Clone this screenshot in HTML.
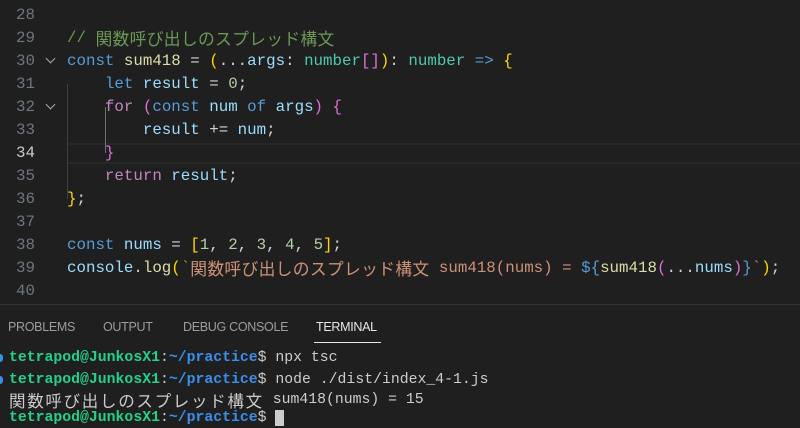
<!DOCTYPE html>
<html><head><meta charset="utf-8"><style>
*{margin:0;padding:0;box-sizing:border-box}
body{width:800px;height:417px;background:#1f1f1f;overflow:hidden;position:relative;font-family:"Liberation Mono","Noto Sans CJK JP",monospace}
.ln{position:absolute;left:0;width:35px;text-align:right;color:#6e7681;font-size:15.8px;line-height:23px}
.c{position:absolute;left:67px;font-size:15.8px;line-height:23px;height:23px;white-space:pre;color:#d4d4d4}
.j{font-family:"Noto Sans CJK JP",sans-serif;font-size:16.8px;letter-spacing:0.3px;display:inline-block;line-height:23px;height:23px;vertical-align:top;overflow:hidden;white-space:nowrap}
.k{color:#569cd6}.p{color:#c586c0}.v{color:#9cdcfe}.f{color:#dcdcaa}.t{color:#4ec9b0}.n{color:#b5cea8}.s{color:#ce9178}.cm{color:#6a9955}
.y{color:#ffd700}.m{color:#da70d6}.b{color:#179fff}
.chev{position:absolute;left:47px;width:7px;height:7px;border-right:1.3px solid #aaa;border-bottom:1.3px solid #aaa;transform:rotate(45deg)}
.tab{position:absolute;top:320px;font-family:"Liberation Sans",sans-serif;font-size:12.5px;color:#9d9d9d;letter-spacing:-0.3px}
.tl{position:absolute;left:9px;font-size:14.8px;line-height:20px;height:20px;white-space:pre;color:#cccccc}
.tl .j{line-height:20px;height:20px;font-size:16.5px;letter-spacing:1.7px}
.g{color:#23d18b;font-weight:bold}.bl{color:#3b8eea;font-weight:bold}
</style></head><body>
<div style="position:absolute;left:67px;top:143px;width:733px;height:21px;border-top:2px solid #282828;border-bottom:2px solid #282828"></div>
<div style="position:absolute;left:67px;top:84px;width:1px;height:115px;background:#404040"></div>
<div style="position:absolute;left:105px;top:107px;width:1px;height:46px;background:#707070"></div>

<div class="ln" style="top:4px">28</div>
<div class="ln" style="top:27px">29</div>
<div class="ln" style="top:50px">30</div>
<div class="ln" style="top:73px">31</div>
<div class="ln" style="top:96px">32</div>
<div class="ln" style="top:119px">33</div>
<div class="ln" style="top:142px;color:#cccccc">34</div>
<div class="ln" style="top:165px">35</div>
<div class="ln" style="top:188px">36</div>
<div class="ln" style="top:211px">37</div>
<div class="ln" style="top:234px">38</div>
<div class="ln" style="top:257px">39</div>
<div class="ln" style="top:280px">40</div>
<div class="chev" style="top:55px"></div>
<div class="chev" style="top:101px"></div>

<div class="c cm" style="top:27px">// <span class="j">関数呼び出しのスプレッド構文</span></div>
<div class="c" style="top:50px"><span class="k">const</span> <span class="f">sum418</span> = <span class="y">(</span>...<span class="v">args</span>: <span class="t">number</span><span class="m">[]</span><span class="y">)</span>: <span class="t">number</span> <span class="k">=&gt;</span> <span class="y">{</span></div>
<div class="c" style="top:73px">    <span class="k">let</span> <span class="v">result</span> = <span class="n">0</span>;</div>
<div class="c" style="top:96px">    <span class="p">for</span> <span class="m">(</span><span class="k">const</span> <span class="v">num</span> <span class="k">of</span> <span class="v">args</span><span class="m">)</span> <span class="m">{</span></div>
<div class="c" style="top:119px">        <span class="v">result</span> += <span class="v">num</span>;</div>
<div class="c" style="top:142px">    <span class="m">}</span></div>
<div class="c" style="top:165px">    <span class="p">return</span> <span class="v">result</span>;</div>
<div class="c" style="top:188px"><span class="y">}</span>;</div>
<div class="c" style="top:234px"><span class="k">const</span> <span class="v">nums</span> = <span class="y">[</span><span class="n">1</span>, <span class="n">2</span>, <span class="n">3</span>, <span class="n">4</span>, <span class="n">5</span><span class="y">]</span>;</div>
<div class="c" style="top:257px"><span class="v">console</span>.<span class="f">log</span><span class="y">(</span><span class="s">`<span class="j">関数呼び出しのスプレッド構文</span> sum418(nums) = </span><span class="k">${</span><span class="f">sum418</span><span class="m">(</span>...<span class="v">nums</span><span class="m">)</span><span class="k">}</span><span class="s">`</span><span class="y">)</span>;</div>

<div style="position:absolute;left:0;top:304px;width:800px;height:1px;background:#333"></div>
<div class="tab" style="left:8px">PROBLEMS</div>
<div class="tab" style="left:103px">OUTPUT</div>
<div class="tab" style="left:183px">DEBUG CONSOLE</div>
<div class="tab" style="left:316px;color:#e7e7e7">TERMINAL</div>
<div style="position:absolute;left:314px;top:342px;width:67px;height:1px;background:#e7e7e7"></div>

<div class="tl" style="top:348px"><span class="g">tetrapod@JunkosX1</span>:<span class="bl">~/practice</span>$ npx tsc</div>
<div class="tl" style="top:370px"><span class="g">tetrapod@JunkosX1</span>:<span class="bl">~/practice</span>$ node ./dist/index_4-1.js</div>
<div class="tl" style="top:390px"><span class="j">関数呼び出しのスプレッド構文</span> sum418(nums) = 15</div>
<div class="tl" style="top:408px"><span class="g">tetrapod@JunkosX1</span>:<span class="bl">~/practice</span>$ <span style="background:#ccc">&nbsp;</span></div>
<div style="position:absolute;left:0;top:354px;width:3px;height:8px;background:#3b8eea;border-radius:0 3px 3px 0"></div>
<div style="position:absolute;left:0;top:376px;width:3px;height:8px;background:#3b8eea;border-radius:0 3px 3px 0"></div>
</body></html>
